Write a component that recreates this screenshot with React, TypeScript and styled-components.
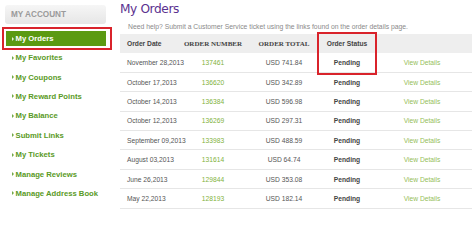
import React from 'react';
import styled, { createGlobalStyle } from 'styled-components';

const GlobalStyle = createGlobalStyle`
  html, body {
    margin: 0;
    padding: 0;
    background: #fff;
    overflow: hidden;
  }
  body {
    font-family: "Liberation Sans", Arial, sans-serif;
    width: 474px;
    height: 210px;
  }
`;

const Page = styled.div`
  display: flex;
  width: 474px;
  height: 210px;
  overflow: hidden;
`;

const Sidebar = styled.div`
  width: 120px;
  flex-shrink: 0;
  padding-top: 5px;
  box-sizing: border-box;
`;

const SideHeader = styled.div`
  margin-left: 5px;
  width: 101px;
  height: 19px;
  display: flex;
  align-items: center;
  padding-left: 6px;
  box-sizing: border-box;
  background: linear-gradient(#f6f6f6, #e6e6e6);
  border-radius: 3px;
  color: #9a9a9a;
  font-size: 8.2px;
  font-weight: bold;
`;

const Highlight = styled.div`
  margin: 3px 0 0 2px;
  width: 110px;
  border: 2px solid #d9232b;
  padding: 2px 4px 2px 2px;
  box-sizing: border-box;
`;

const NavList = styled.ul`
  list-style: none;
  margin: -2px 0 0;
  padding: 0;
`;

const NavItem = styled.li<{ $active?: boolean }>`
  display: flex;
  align-items: center;
  gap: 1.5px;
  height: ${p => (p.$active ? '15px' : '19.4px')};
  padding-left: ${p => (p.$active ? '6px' : '12px')};
  background: ${p => (p.$active ? '#5b9a12' : 'transparent')};
  color: ${p => (p.$active ? '#fff' : '#5a9a26')};
  font-size: 7.7px;
  font-weight: bold;
  white-space: nowrap;
`;

const Bullet = styled.span`
  width: 0;
  height: 0;
  border-top: 2px solid transparent;
  border-bottom: 2px solid transparent;
  border-left: 2px solid currentColor;
  opacity: 0.85;
`;

const Main = styled.div`
  flex: 1;
  min-width: 0;
`;

const Title = styled.h1`
  margin: 0;
  padding-top: 2px;
  height: 19px;
  box-sizing: border-box;
  font-family: "DejaVu Sans", Verdana, sans-serif;
  font-weight: normal;
  font-size: 12.2px;
  letter-spacing: -0.4px;
  line-height: 15px;
  color: #5b3190;
`;

const Help = styled.p`
  margin: 0;
  padding-left: 8px;
  height: 15px;
  line-height: 15px;
  font-size: 6.8px;
  color: #8a8a8a;
  white-space: nowrap;
`;

const TableWrap = styled.div`
  position: relative;
  width: 352px;
`;

const Table = styled.table`
  width: 352px;
  border-collapse: collapse;
  table-layout: fixed;
`;

const HeadRow = styled.tr`
  background: #eeeeee;
  height: 19px;
`;

const Th = styled.th<{ $caps?: boolean; $align?: string }>`
  padding: 0 0 0 ${p => (p.$align === 'left' ? '7px' : '0')};
  text-align: ${p => p.$align || 'center'};
  font-family: ${p =>
    p.$caps ? '"Liberation Serif", Georgia, serif' : '"Liberation Sans", Arial, sans-serif'};
  font-size: ${p => (p.$caps ? '7px' : '6.7px')};
  font-weight: bold;
  color: #444;
  white-space: nowrap;
`;

const Row = styled.tr`
  height: 19.4px;
  border-bottom: 1px solid #e6e6e6;
`;

const Td = styled.td<{ $tone?: 'link' | 'detail' | 'status'; $align?: string }>`
  padding: 0 0 0 ${p => (p.$align === 'left' ? '7px' : '0')};
  text-align: ${p => p.$align || 'center'};
  font-size: 6.7px;
  white-space: nowrap;
  font-weight: ${p => (p.$tone === 'status' ? 'bold' : 'normal')};
  color: ${p =>
    p.$tone === 'link' ? '#7fb23c' : p.$tone === 'detail' ? '#95c05a' : p.$tone === 'status' ? '#444' : '#555'};
`;

const Callout = styled.div`
  position: absolute;
  left: 197px;
  top: -2px;
  width: 60px;
  height: 43px;
  border: 2px solid #d9232b;
  box-sizing: border-box;
  pointer-events: none;
`;

const navItems = [
  'My Favorites',
  'My Coupons',
  'My Reward Points',
  'My Balance',
  'Submit Links',
  'My Tickets',
  'Manage Reviews',
  'Manage Address Book',
];

const orders = [
  ['November 28,2013', '137461', 'USD 741.84'],
  ['October 17,2013', '136620', 'USD 342.89'],
  ['October 14,2013', '136384', 'USD 596.98'],
  ['October 12,2013', '136269', 'USD 297.31'],
  ['September 09,2013', '133983', 'USD 488.59'],
  ['August 03,2013', '131614', 'USD 64.74'],
  ['June 26,2013', '129844', 'USD 353.08'],
  ['May 22,2013', '128193', 'USD 182.14'],
];

const App: React.FC = () => {
  return (
    <Page>
      <GlobalStyle />
      <Sidebar>
        <SideHeader>MY ACCOUNT</SideHeader>
        <Highlight>
          <NavItem as="div" $active>
            <Bullet />My Orders
          </NavItem>
        </Highlight>
        <NavList>
          {navItems.map(item => (
            <NavItem key={item}>
              <Bullet />
              {item}
            </NavItem>
          ))}
        </NavList>
      </Sidebar>

      <Main>
        <Title>My Orders</Title>
        <Help>
          Need help? Submit a Customer Service ticket using the links found on the order details page.
        </Help>
        <TableWrap>
          <Table>
            <colgroup>
              <col style={{ width: 60 }} />
              <col style={{ width: 66 }} />
              <col style={{ width: 76 }} />
              <col style={{ width: 50 }} />
              <col style={{ width: 100 }} />
            </colgroup>
            <thead>
              <HeadRow>
                <Th $align="left">Order Date</Th>
                <Th $caps>ORDER NUMBER</Th>
                <Th $caps>ORDER TOTAL</Th>
                <Th>Order Status</Th>
                <Th />
              </HeadRow>
            </thead>
            <tbody>
              {orders.map(([date, num, total]) => (
                <Row key={num}>
                  <Td $align="left">{date}</Td>
                  <Td $tone="link">{num}</Td>
                  <Td>{total}</Td>
                  <Td $tone="status">Pending</Td>
                  <Td $tone="detail">View Details</Td>
                </Row>
              ))}
            </tbody>
          </Table>
          <Callout />
        </TableWrap>
      </Main>
    </Page>
  );
};

export default App;
